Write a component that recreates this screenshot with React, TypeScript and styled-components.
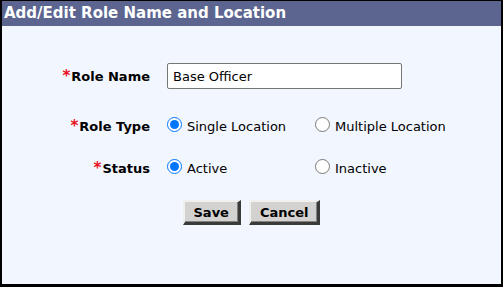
import React from "react";
import styled, { createGlobalStyle } from "styled-components";

const Global = createGlobalStyle`
  html, body { margin: 0; padding: 0; background: #ffffff; }
  body { font-family: "DejaVu Sans", Verdana, sans-serif; }
`;

const Frame = styled.div`
  box-sizing: border-box;
  width: 503px;
  height: 287px;
  border-style: solid;
  border-color: #000;
  border-width: 1px 2px 3px 2px;
  background: #f2f6fe;
  display: flex;
  flex-direction: column;
`;

const Header = styled.div`
  height: 25px;
  background: #5b6590;
  color: #fff;
  font-weight: bold;
  font-size: 15px;
  line-height: 25px;
  padding-left: 2px;
  white-space: nowrap;
`;

const Form = styled.div`
  display: grid;
  grid-template-columns: 148px 1fr;
  column-gap: 17px;
  align-items: center;
`;

const Label = styled.div<{ $top: number }>`
  margin-top: ${(p) => p.$top}px;
  text-align: right;
  font-weight: bold;
  font-size: 13px;
  color: #000;
  white-space: nowrap;
`;

const Star = styled.span`
  color: #e8101e;
  font-size: 15px;
  margin-right: 1px;
`;

const Field = styled.div<{ $top: number }>`
  margin-top: ${(p) => p.$top}px;
  display: flex;
  align-items: center;
`;

const TextInput = styled.input`
  box-sizing: border-box;
  width: 235px;
  height: 26px;
  border: 1px solid #767676;
  border-radius: 2px;
  background: #fff;
  font-family: "DejaVu Sans", Verdana, sans-serif;
  font-size: 13px;
  padding: 0 5px;
  color: #000;
  outline: none;
`;

const Option = styled.label<{ $width: number }>`
  display: flex;
  align-items: center;
  width: ${(p) => p.$width}px;
  font-size: 13px;
  color: #000;
  white-space: nowrap;
`;

const Radio = styled.input`
  width: 15px;
  height: 15px;
  margin: 0 5px 0 0;
  accent-color: #0075ff;
  position: relative;
  top: -2px;
`;

const Buttons = styled.div`
  grid-column: 1 / span 2;
  margin-top: 23px;
  display: flex;
  justify-content: center;
  gap: 8px;
  margin-left: 0px;
`;

const Button = styled.button`
  height: 25px;
  padding: 0 9px;
  background: #d4d2d0;
  border-style: solid;
  border-width: 2px 3px 3px 2px;
  border-color: #f0f0f0 #3a3a3a #3a3a3a #f0f0f0;
  font-family: "DejaVu Sans", Verdana, sans-serif;
  font-weight: bold;
  font-size: 13px;
  color: #000;
  box-shadow: inset -1px -1px 0 #808080;
`;

export default function App() {
  return (
    <>
      <Global />
      <Frame>
        <Header>Add/Edit Role Name and Location</Header>
        <Form>
          <Label $top={37}>
            <Star>*</Star>Role Name
          </Label>
          <Field $top={37}>
            <TextInput defaultValue="Base Officer" />
          </Field>

          <Label $top={28}>
            <Star>*</Star>Role Type
          </Label>
          <Field $top={28}>
            <Option $width={148}>
              <Radio type="radio" name="type" defaultChecked />
              Single Location
            </Option>
            <Option $width={140}>
              <Radio type="radio" name="type" />
              Multiple Location
            </Option>
          </Field>

          <Label $top={24}>
            <Star>*</Star>Status
          </Label>
          <Field $top={24}>
            <Option $width={148}>
              <Radio type="radio" name="status" defaultChecked />
              Active
            </Option>
            <Option $width={100}>
              <Radio type="radio" name="status" />
              Inactive
            </Option>
          </Field>

          <Buttons>
            <Button>Save</Button>
            <Button>Cancel</Button>
          </Buttons>
        </Form>
      </Frame>
    </>
  );
}
